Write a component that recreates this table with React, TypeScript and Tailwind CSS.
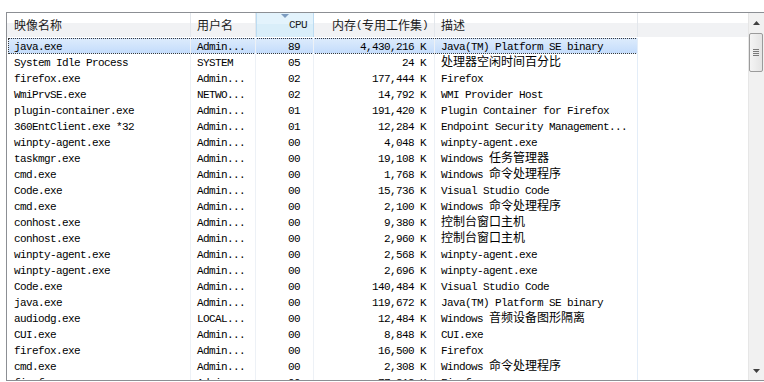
import React from 'react';

type Row = [string, string, string, string, string];

const ROWS: Row[] = [
  ['java.exe', 'Admin...', '89', '4,430,216 K', 'Java(TM) Platform SE binary'],
  ['System Idle Process', 'SYSTEM', '05', '24 K', '处理器空闲时间百分比'],
  ['firefox.exe', 'Admin...', '02', '177,444 K', 'Firefox'],
  ['WmiPrvSE.exe', 'NETWO...', '02', '14,792 K', 'WMI Provider Host'],
  ['plugin-container.exe', 'Admin...', '01', '191,420 K', 'Plugin Container for Firefox'],
  ['360EntClient.exe *32', 'Admin...', '01', '12,284 K', 'Endpoint Security Management...'],
  ['winpty-agent.exe', 'Admin...', '00', '4,048 K', 'winpty-agent.exe'],
  ['taskmgr.exe', 'Admin...', '00', '19,108 K', 'Windows 任务管理器'],
  ['cmd.exe', 'Admin...', '00', '1,768 K', 'Windows 命令处理程序'],
  ['Code.exe', 'Admin...', '00', '15,736 K', 'Visual Studio Code'],
  ['cmd.exe', 'Admin...', '00', '2,100 K', 'Windows 命令处理程序'],
  ['conhost.exe', 'Admin...', '00', '9,380 K', '控制台窗口主机'],
  ['conhost.exe', 'Admin...', '00', '2,960 K', '控制台窗口主机'],
  ['winpty-agent.exe', 'Admin...', '00', '2,568 K', 'winpty-agent.exe'],
  ['winpty-agent.exe', 'Admin...', '00', '2,696 K', 'winpty-agent.exe'],
  ['Code.exe', 'Admin...', '00', '140,484 K', 'Visual Studio Code'],
  ['java.exe', 'Admin...', '00', '119,672 K', 'Java(TM) Platform SE binary'],
  ['audiodg.exe', 'LOCAL...', '00', '12,484 K', 'Windows 音频设备图形隔离'],
  ['CUI.exe', 'Admin...', '00', '8,848 K', 'CUI.exe'],
  ['firefox.exe', 'Admin...', '00', '16,500 K', 'Firefox'],
  ['cmd.exe', 'Admin...', '00', '2,308 K', 'Windows 命令处理程序'],
  ['firefox.exe', 'Admin...', '00', '77,312 K', 'Firefox'],
];

// split mixed text so latin runs get the narrow mono face and CJK runs stay full width
const Txt = ({ s }: { s: string }) => (
  <>
    {s.split(/([\u3000-\u9fff\uff00-\uffef]+)/).map((p, i) =>
      p === '' ? null : /[\u3000-\u9fff\uff00-\uffef]/.test(p) ? (
        <span key={i} className="font-['Noto_Sans_CJK_SC',sans-serif] text-[12px] tracking-normal">
          {p}
        </span>
      ) : (
        <span key={i} className="font-['Liberation_Mono',monospace] text-[11px] tracking-[-0.6px]">
          {p}
        </span>
      )
    )}
  </>
);

const HeaderCell = ({ w, children, right, active }: { w: string; children: React.ReactNode; right?: boolean; active?: boolean }) => (
  <div
    className={`${w} relative h-full flex items-center whitespace-nowrap border-r ${
      active
        ? 'border-[#bcdcf2] border-l bg-[linear-gradient(to_bottom,#e3f3fc_0%,#e3f3fc_45%,#d9eef9_45%,#d9eef9_100%)]'
        : 'border-[#e3e7ec]'
    } ${right ? 'justify-end pr-[6px]' : 'pl-[6px]'} text-[#1b1b1b]`}
  >
    {active && (
      <svg className="absolute left-[24px] top-[1px]" width="8" height="4" viewBox="0 0 8 4">
        <path d="M0 0H8L4 4Z" fill="#7c9cc0" />
      </svg>
    )}
    {children}
  </div>
);

export default function App() {
  return (
    <div className="w-[764px] h-[382px] bg-white pt-[12px] pl-[6px] overflow-hidden text-black">
      <div className="h-[369px] flex border-t border-b border-l border-[#8c8f94]">
        <div className="w-[741px] flex flex-col overflow-hidden">
          <div className="h-[24px] flex shrink-0 bg-[linear-gradient(to_bottom,#ffffff_0%,#ffffff_42%,#f1f2f4_42%,#f1f2f4_100%)]">
            <HeaderCell w="w-[184px] pl-[7px]">
              <Txt s="映像名称" />
            </HeaderCell>
            <HeaderCell w="w-[65px]">
              <Txt s="用户名" />
            </HeaderCell>
            <HeaderCell w="w-[58px]" right active>
              <Txt s="CPU" />
            </HeaderCell>
            <HeaderCell w="w-[121px]" right>
              <Txt s="内存(专用工作集)" />
            </HeaderCell>
            <HeaderCell w="w-[203px]">
              <Txt s="描述" />
            </HeaderCell>
            <div className="flex-1" />
          </div>
          <div className="pt-[1px] flex-1 overflow-hidden">
            {ROWS.map((r, i) => (
              <div key={i} className="relative h-[16px] flex leading-[12px] whitespace-nowrap">
                {i === 0 && (
                  <div className="absolute left-[1px] top-0 h-[16px] w-[630px] border border-dotted border-[#3a3a3a] bg-[linear-gradient(to_bottom,#dcebfc,#c4dcfb)]" />
                )}
                <div className="relative w-[184px] pl-[7px] border-r border-[#edf1f6]">
                  <Txt s={r[0]} />
                </div>
                <div className="relative w-[65px] pl-[6px] border-r border-[#edf1f6]">
                  <Txt s={r[1]} />
                </div>
                <div className="relative w-[58px] pr-[13px] text-right border-r border-[#edf1f6]">
                  <Txt s={r[2]} />
                </div>
                <div className="relative w-[121px] pr-[8px] text-right border-r border-[#edf1f6]">
                  <Txt s={r[3]} />
                </div>
                <div className="relative w-[203px] pl-[6px] border-r border-[#e3edf8]">
                  <Txt s={r[4]} />
                </div>
              </div>
            ))}
          </div>
        </div>
        <div className="w-[16px] flex flex-col bg-[#f1f1f1] border-l border-[#e6e6e6]">
          <div className="h-[17px] flex items-center justify-center pt-[2px]">
            <svg width="7" height="4" viewBox="0 0 7 4">
              <path d="M3.5 0L7 4H0Z" fill="#404040" />
            </svg>
          </div>
          <div className="mt-[3px] mr-[1px] h-[39px] rounded-[2px] border border-[#9b9b9b] bg-[linear-gradient(to_right,#f4f4f4,#e4e4e4)] flex flex-col items-center justify-center gap-[1px]">
            <div className="w-[6px] h-[1px] bg-[#7a7a7a]" />
            <div className="w-[6px] h-[1px] bg-[#7a7a7a]" />
            <div className="w-[6px] h-[1px] bg-[#7a7a7a]" />
            <div className="w-[6px] h-[1px] bg-[#7a7a7a]" />
          </div>
          <div className="flex-1" />
          <div className="h-[17px] flex items-center justify-center pb-[2px]">
            <svg width="7" height="4" viewBox="0 0 7 4">
              <path d="M0 0H7L3.5 4Z" fill="#404040" />
            </svg>
          </div>
        </div>
      </div>
    </div>
  );
}
